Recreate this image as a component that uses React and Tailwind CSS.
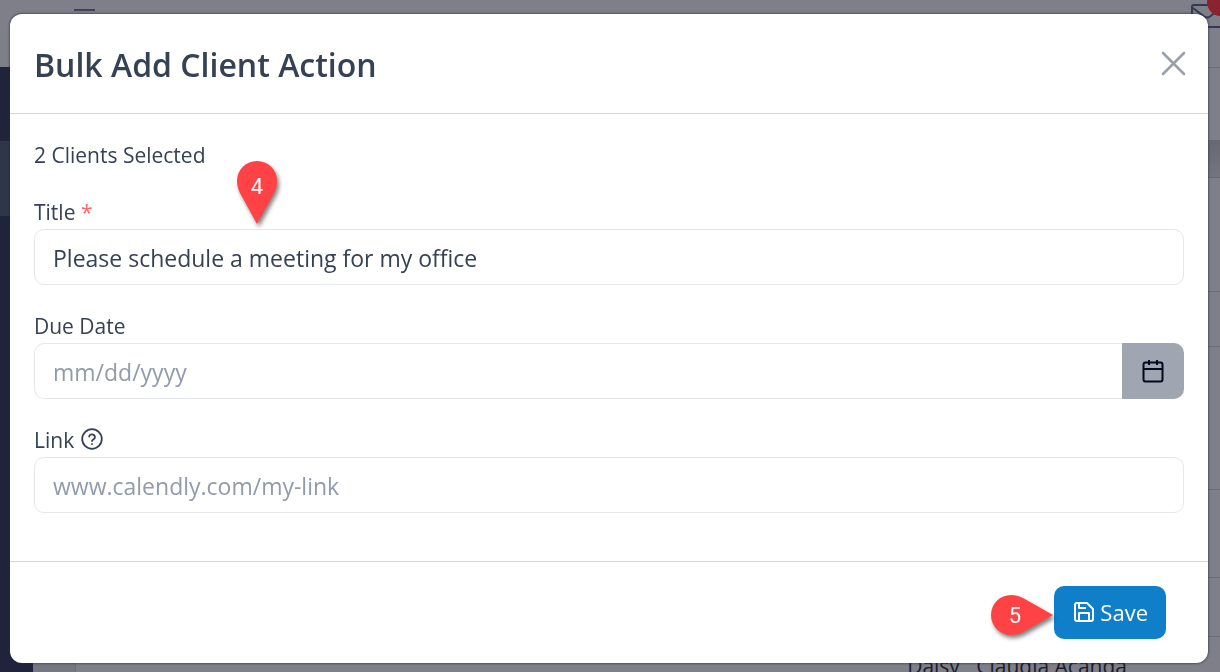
import { useState } from 'react';

const inputClass =
  'h-14 w-full min-w-0 border border-gray-200 bg-white px-[18px] pt-[2px] text-[23px] text-gray-700 placeholder-[#929baa] outline-none';

const rows = ['h-[114px]', 'h-[55px]', 'h-[143px]', 'h-[88px]', 'h-[59px]'];

const Backdrop = () => (
  <div className="fixed inset-0 flex flex-col overflow-hidden bg-[#7f7f89]" aria-hidden="true">
    <div className="flex h-[68px] shrink-0 items-start justify-between border-b border-[#6d6d79] pl-[74px]">
      <div className="mt-[9px] h-[2px] w-[21px] bg-[#3f4155]" />
      <div className="relative -mr-1 mt-1">
        <svg width="34" height="25" viewBox="0 0 34 25" fill="none" stroke="#353a52" strokeWidth="2">
          <rect x="2" y="1" width="30" height="22" rx="2" />
          <path d="M3 4l11 8.5q3 2 6 0L31 4" />
        </svg>
        <span className="absolute -top-4 left-[17px] h-7 w-7 rounded-full bg-[#8b2230]" />
      </div>
    </div>
    <div className="-mt-px flex flex-1">
      <div className="w-[33px] shrink-0 bg-[#1f243c] pt-[74px]">
        <div className="h-[75px] bg-[#30364a]" />
      </div>
      <div className="w-[43px] shrink-0 border-r border-[#6d6d79] bg-[#777782]" />
      <div className="flex-1">
        <div className="h-[73px]" />
        <div className="h-[38px] border-b border-[#686875] bg-gradient-to-b from-[#686873] to-[#757580]" />
        {rows.map((height) => (
          <div key={height} className={`border-b border-[#6d6d79] ${height}`} />
        ))}
        <p className="flex justify-end whitespace-pre pr-[93px] pt-3 text-[21px] leading-[34px] text-[#1c1d2c]">
          {'Daisy   Claudia Acanda'}
        </p>
      </div>
    </div>
  </div>
);

const PinDown = ({ label }) => (
  <svg
    className="pointer-events-none absolute -top-9 left-[202px] drop-shadow-[2px_3px_2px_rgba(0,0,0,0.5)]"
    width="42"
    height="64"
    viewBox="0 0 42 64"
  >
    <path d="M21 63L4 32C2 28 1 24 1 20a20 20 0 0 1 40 0c0 4-1 8-3 12Z" fill="#ff4245" />
    <text x="21" y="33" textAnchor="middle" fontSize="22" fontFamily="Roboto, sans-serif" fill="#fff">
      {label}
    </text>
  </svg>
);

const PinRight = ({ label }) => (
  <svg
    className="pointer-events-none absolute right-full top-2 drop-shadow-[2px_3px_2px_rgba(0,0,0,0.5)]"
    width="64"
    height="42"
    viewBox="0 0 64 42"
  >
    <path d="M63 21L33 38C29 40 25 41 21 41a20 20 0 0 1 0-40c4 0 8 1 12 3Z" fill="#ff4245" />
    <text x="25" y="29" textAnchor="middle" fontSize="22" fontFamily="Roboto, sans-serif" fill="#fff">
      {label}
    </text>
  </svg>
);

const App = () => {
  const [title, setTitle] = useState('Please schedule a meeting for my office');
  const [dueDate, setDueDate] = useState('');
  const [link, setLink] = useState('');

  return (
    <div className="min-h-screen font-['Open_Sans','Noto_Sans',sans-serif] text-gray-700">
      <Backdrop />

      <div className="relative pb-[9px] pl-[10px] pr-3 pt-[14px]">
        <div
          role="dialog"
          aria-labelledby="dialog-title"
          className="rounded-xl bg-white shadow-[0_0_2px_1px_rgba(40,40,60,0.5)]"
        >
          <div className="flex h-[100px] items-center justify-between border-b border-gray-300 pl-6 pr-5">
            <h1 id="dialog-title" className="pt-[2px] text-[32px] font-semibold">
              Bulk Add Client Action
            </h1>
            <button type="button" aria-label="Close" className="text-[#98a0aa]">
              <svg width="30" height="30" viewBox="0 0 30 30" fill="none" stroke="currentColor" strokeWidth="2.6" strokeLinecap="round">
                <path d="M5 4l21 21M26 4l-21 21" />
              </svg>
            </button>
          </div>

          <form id="action-form" onSubmit={(e) => e.preventDefault()}>
            <div className="flex flex-col gap-[26px] px-6 pb-12 pt-[25px] text-[21px]">
              <p className="leading-8">2 Clients Selected</p>

              <div className="relative">
                <label htmlFor="title" className="block pb-[2px] leading-[30px]">
                  Title <span className="text-red-400">*</span>
                </label>
                <input
                  id="title"
                  type="text"
                  value={title}
                  onChange={(e) => setTitle(e.target.value)}
                  className={`${inputClass} block rounded-[10px]`}
                />
                <PinDown label="4" />
              </div>

              <div>
                <label htmlFor="due-date" className="block pb-[2px] leading-[30px]">
                  Due Date
                </label>
                <div className="flex">
                  <input
                    id="due-date"
                    type="text"
                    placeholder="mm/dd/yyyy"
                    value={dueDate}
                    onChange={(e) => setDueDate(e.target.value)}
                    className={`${inputClass} rounded-l-[10px] border-r-0`}
                  />
                  <button
                    type="button"
                    aria-label="Choose date"
                    className="flex w-[62px] shrink-0 items-center justify-center rounded-r-[10px] bg-[#9fa6b2] text-[#05071c]"
                  >
                    <svg width="24" height="24" viewBox="0 0 24 24" fill="none" stroke="currentColor" strokeWidth="2">
                      <rect x="2.5" y="3.5" width="19" height="19" rx="2" />
                      <path d="M2.5 10h19M8 1v5M16 1v5" />
                    </svg>
                  </button>
                </div>
              </div>

              <div>
                <div className="flex items-center gap-1 pb-[2px] leading-[30px]">
                  <label htmlFor="link">Link</label>
                  <svg width="26" height="26" viewBox="0 0 26 26" fill="none" stroke="currentColor" strokeWidth="1.8" strokeLinecap="round">
                    <circle cx="14" cy="12" r="9.8" />
                    <path d="M11.2 9.6a2.9 2.9 0 0 1 5.7.8c0 1.9-2.9 2.2-2.9 3.6" />
                    <path d="M14 17h.01" />
                  </svg>
                </div>
                <input
                  id="link"
                  type="text"
                  placeholder="www.calendly.com/my-link"
                  value={link}
                  onChange={(e) => setLink(e.target.value)}
                  className={`${inputClass} block rounded-[10px]`}
                />
              </div>
            </div>
          </form>

          <div className="flex justify-end border-t border-gray-300 pb-6 pl-6 pr-[42px] pt-6">
            <div className="relative">
              <button
                type="submit"
                form="action-form"
                className="flex h-[53px] items-center gap-1 rounded-[10px] bg-[#107fc9] px-[18px] text-[22px] font-medium text-white"
              >
                <svg width="24" height="24" viewBox="0 0 24 24" fill="none" stroke="currentColor" strokeWidth="2" strokeLinejoin="round">
                  <path d="M5 2h10l6 6v10a2 2 0 0 1-2 2H5a2 2 0 0 1-2-2V4a2 2 0 0 1 2-2Z" />
                  <path d="M7 20v-8h10v8M7 2v5h7" />
                </svg>
                Save
              </button>
              <PinRight label="5" />
            </div>
          </div>
        </div>
      </div>
    </div>
  );
};

export default App;
